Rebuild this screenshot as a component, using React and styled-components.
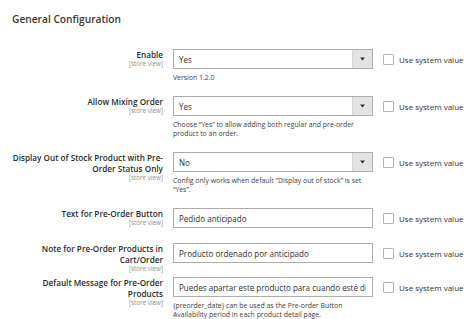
import React from "react";
import styled, { createGlobalStyle } from "styled-components";

const Global = createGlobalStyle`
  html, body { margin: 0; padding: 0; background: #fff; }
  body { font-family: "Open Sans", "DejaVu Sans", sans-serif; color: #303030; }
`;

const Page = styled.div`
  width: 474px;
  height: 319px;
  overflow: hidden;
  padding: 12px 0 0 12px;
  box-sizing: border-box;
`;

const Title = styled.h2`
  margin: 0 0 23px 0;
  font-size: 10.2px;
  line-height: 14px;
  font-weight: 600;
  color: #41362f;
`;

const Row = styled.div`
  display: grid;
  grid-template-columns: 151px 201px auto;
  column-gap: 9px;
  align-items: start;
  margin-bottom: ${(p) => p.$space}px;
`;

const LabelCell = styled.div`
  text-align: right;
`;

const LabelText = styled.div`
  font-size: 8.2px;
  line-height: 11px;
  font-weight: 600;
  color: #2b2b2b;
`;

const Scope = styled.div`
  font-size: 6.3px;
  line-height: 8px;
  color: #8f8f8f;
`;

const Control = styled.div`
  display: flex;
  flex-direction: column;
  padding-left: 1px;
`;

const Box = styled.div`
  height: 20px;
  box-sizing: border-box;
  border: 1px solid #adadad;
  background: #fff;
  display: flex;
  align-items: center;
  font-size: 8.05px;
  color: #303030;
`;

const BoxText = styled.span`
  flex: 1;
  min-width: 0;
  margin: 0 6px 0 5px;
  white-space: nowrap;
  overflow: hidden;
`;

const Arrow = styled.span`
  width: 19px;
  height: 100%;
  background: #e3e3e3;
  border-left: 1px solid #d6d6d6;
  display: flex;
  align-items: center;
  justify-content: center;
`;

const Note = styled.div`
  margin-top: 4px;
  font-size: 6.9px;
  line-height: 9px;
  color: #3d3d3d;
`;

const SysCell = styled.label`
  display: flex;
  align-items: center;
  gap: 5px;
  height: 20px;
  padding-left: 1px;
  font-size: 8px;
  color: #303030;
  white-space: nowrap;
`;

const Check = styled.span`
  width: 9px;
  height: 9px;
  border: 1px solid #b5b5b5;
  border-radius: 1px;
  background: #fff;
`;

const Field = ({ label, select, value, note, space }) => (
  <Row $space={space}>
    <LabelCell>
      <LabelText>{label}</LabelText>
      <Scope>[store view]</Scope>
    </LabelCell>
    <Control>
      <Box>
        <BoxText>{value}</BoxText>
        {select && (
          <Arrow>
            <svg width="5" height="4" viewBox="0 0 5 4">
              <path d="M0 0.5h5L2.5 3.5z" fill="#303030" />
            </svg>
          </Arrow>
        )}
      </Box>
      {note && <Note>{note}</Note>}
    </Control>
    <SysCell>
      <Check />
      Use system value
    </SysCell>
  </Row>
);

export default function App() {
  return (
    <>
      <Global />
      <Page>
        <Title>General Configuration</Title>
        <Field label="Enable" select value="Yes" note="Version 1.2.0" space={14} />
        <Field
          label="Allow Mixing Order"
          select
          value="Yes"
          note={<>Choose “Yes” to allow adding both regular and pre-order<br />product to an order.</>}
          space={14}
        />
        <Field
          label="Display Out of Stock Product with Pre-Order Status Only"
          select
          value="No"
          note={<>Config only works when default “Display out of stock” is set<br />“Yes”.</>}
          space={14}
        />
        <Field label="Text for Pre-Order Button" value="Pedido anticipado" space={15} />
        <Field label="Note for Pre-Order Products in Cart/Order" value="Producto ordenado por anticipado" space={4} />
        <Field
          label="Default Message for Pre-Order Products"
          value="Puedes apartar este producto para cuando esté disponible"
          note={<>{"{preorder_date}"} can be used as the Pre-order Button<br />Availability period in each product detail page.</>}
          space={0}
        />
      </Page>
    </>
  );
}
